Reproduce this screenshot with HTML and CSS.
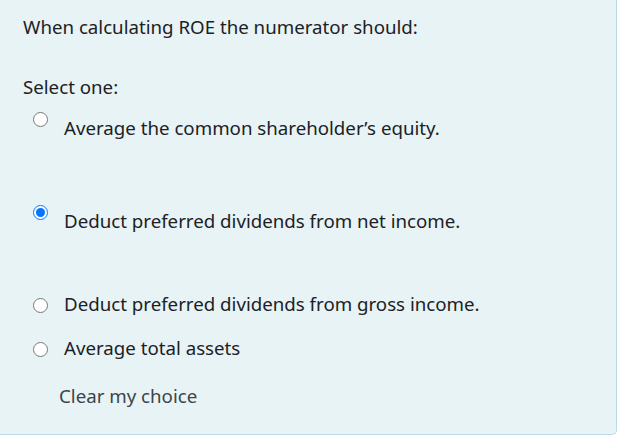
FILE: index.html
```html
<!DOCTYPE html>
<html>
  <head>
    <title>Question</title>
    <link rel="stylesheet" href="styles.css">
  </head>
  <body>
    <div class="formulation">
      <div class="qtext">When calculating ROE the numerator should:</div>
      <div class="ablock">
        <div class="prompt">Select one:</div>
        <div class="answer">
          <div class="option">
            <input type="radio" name="q1" id="q1a">
            <label for="q1a"><p>Average the common shareholder’s equity.</p></label>
          </div>
          <div class="option">
            <input type="radio" name="q1" id="q1b" checked>
            <label for="q1b"><p>Deduct preferred dividends from net income.</p></label>
          </div>
          <div class="option">
            <input type="radio" name="q1" id="q1c">
            <label for="q1c">Deduct preferred dividends from gross income.</label>
          </div>
          <div class="option">
            <input type="radio" name="q1" id="q1d">
            <label for="q1d">Average total assets</label>
          </div>
        </div>
        <button class="clear-choice" type="button">Clear my choice</button>
      </div>
    </div>
  </body>
</html>
```

FILE: styles.css
```css
html,
body {
  margin: 0;
  padding: 0;
  background: #fff;
}
body {
  font-family: "Noto Sans", "Open Sans", Arial, sans-serif;
  font-size: 18.7px;
  color: #1d2125;
}
.formulation {
  width: 617px;
  height: 435px;
  box-sizing: border-box;
  padding: 13px 0 0 23px;
  background: #e7f3f5;
  border-right: 1px solid #b8dce2;
  border-bottom: 1px solid #b8dce2;
  border-bottom-right-radius: 5px;
}
.qtext {
  line-height: 28px;
  margin-bottom: 32px;
}
.prompt {
  line-height: 28px;
}
.option {
  display: flex;
  align-items: flex-start;
  padding: 3px 0 13px 10px;
  line-height: 28px;
}
.option input {
  width: 15px;
  height: 15px;
  margin: 7.5px 16px 0 0;
  flex-shrink: 0;
}
.option label p {
  margin: 10px 0 39px 0;
}
.clear-choice {
  display: block;
  margin-top: 7px;
  padding: 0 0 0 36px;
  border: none;
  background: none;
  font: inherit;
  line-height: 28px;
  color: #3d4348;
  cursor: pointer;
}
```
